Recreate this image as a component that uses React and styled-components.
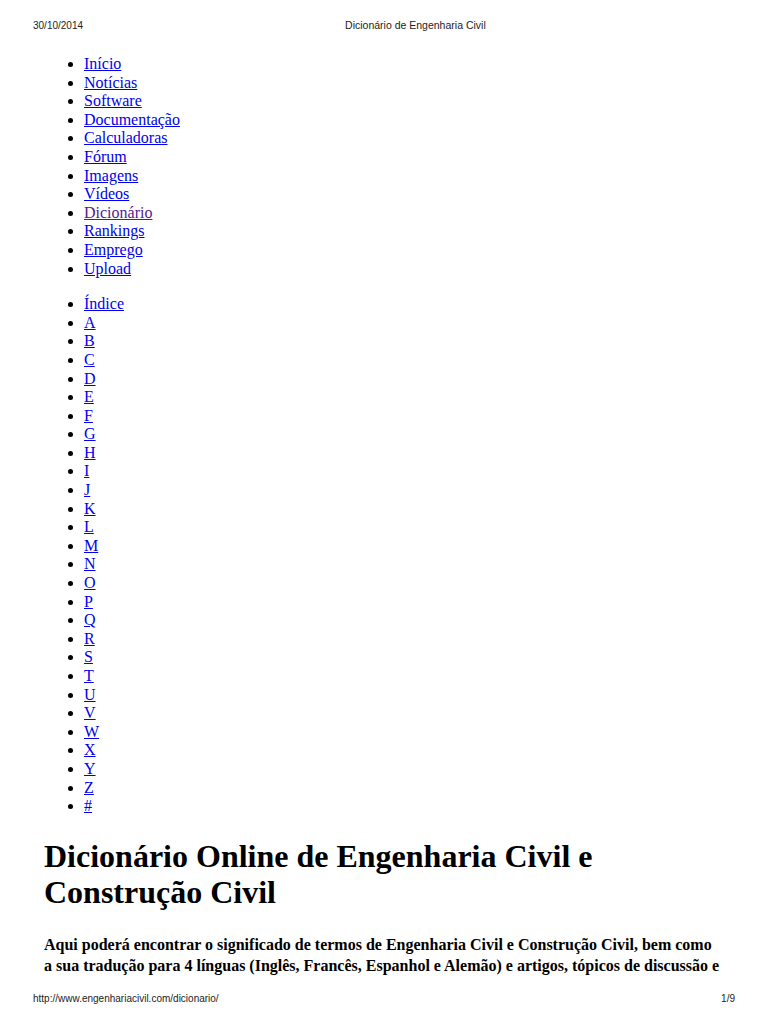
import React from "react";
import styled, { createGlobalStyle } from "styled-components";

const GlobalStyle = createGlobalStyle`
  html, body {
    margin: 0;
    padding: 0;
    background: #fff;
  }
`;

const Page = styled.div`
  width: 768px;
  height: 1024px;
  display: flex;
  flex-direction: column;
  overflow: hidden;
  background: #fff;
`;

const PrintBar = styled.div`
  display: flex;
  align-items: center;
  justify-content: ${(p) => (p.$spread ? "space-between" : "flex-start")};
  height: 20px;
  padding: 0 33px;
  font-family: "Liberation Sans", Arial, sans-serif;
  font-size: 10px;
  color: #222;
  flex-shrink: 0;
`;

const Header = styled(PrintBar)`
  padding-top: 15px;
`;

const Footer = styled(PrintBar)`
  padding-top: 12px;
  padding-bottom: 16px;
`;

const Title = styled.span`
  margin-left: 262px;
  font-size: 10.5px;
`;

const Content = styled.main`
  flex: 1;
  overflow: hidden;
  padding: 20px 46px 0 44px;
  font-family: "Liberation Serif", "Times New Roman", serif;
  font-size: 16px;
  color: #000;
`;

const Menu = styled.ul`
  margin: 0 0 17px;
  padding-left: 40px;
  list-style: disc;
  line-height: 18.6px;
`;

const Link = styled.a`
  color: ${(p) => (p.$visited ? "#551a8b" : "#0000ee")};
  text-decoration: underline;
`;

const Heading = styled.h1`
  font-size: 32px;
  font-weight: bold;
  line-height: 36px;
  margin: 22px 0 24px;
`;

const Intro = styled.p`
  margin: 0;
  font-weight: bold;
  font-size: 16px;
  line-height: 21px;
`;

const mainMenu = [
  "Início",
  "Notícias",
  "Software",
  "Documentação",
  "Calculadoras",
  "Fórum",
  "Imagens",
  "Vídeos",
  "Dicionário",
  "Rankings",
  "Emprego",
  "Upload",
];

const letters = ["Índice", ..."ABCDEFGHIJKLMNOPQRSTUVWXYZ".split(""), "#"];

export default function App() {
  return (
    <Page>
      <GlobalStyle />
      <Header>
        <span>30/10/2014</span>
        <Title>Dicionário de Engenharia Civil</Title>
      </Header>
      <Content>
        <Menu>
          {mainMenu.map((item) => (
            <li key={item}>
              <Link href="#" $visited={item === "Dicionário"}>
                {item}
              </Link>
            </li>
          ))}
        </Menu>
        <Menu>
          {letters.map((l) => (
            <li key={l}>
              <Link href="#">{l}</Link>
            </li>
          ))}
        </Menu>
        <Heading>Dicionário Online de Engenharia Civil e Construção Civil</Heading>
        {/* page 1 of the print ends after the second line */}
        <Intro>
          Aqui poderá encontrar o significado de termos de Engenharia Civil e
          Construção Civil, bem como a sua tradução para 4 línguas (Inglês,
          Francês, Espanhol e Alemão) e artigos, tópicos de discussão e
        </Intro>
      </Content>
      <Footer $spread>
        <span>http://www.engenhariacivil.com/dicionario/</span>
        <span>1/9</span>
      </Footer>
    </Page>
  );
}
